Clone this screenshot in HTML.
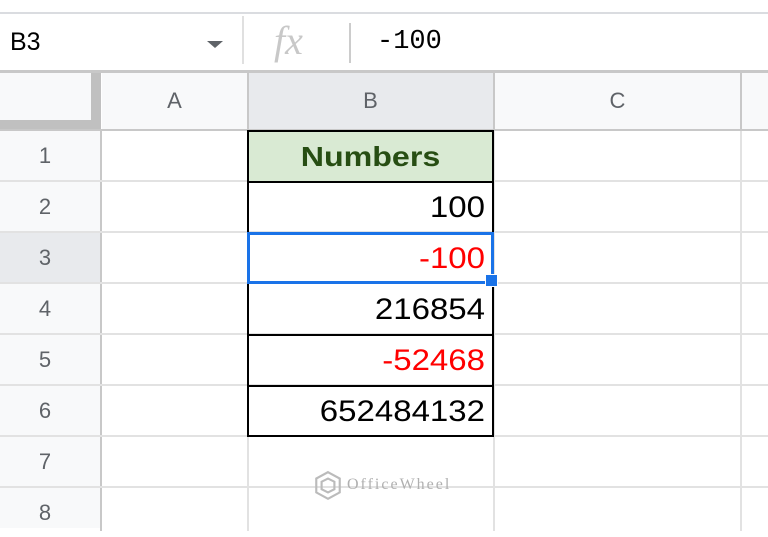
<!DOCTYPE html>
<html><head><style>
*{margin:0;padding:0;box-sizing:border-box}
body{width:768px;height:524px;overflow:hidden;background:#fff;position:relative;font-family:"Liberation Sans",Arial,sans-serif}
.a{position:absolute}
.hl{position:absolute;height:2px;background:#e2e2e2}
.vl{position:absolute;width:2px;background:#e2e2e2}
.rh{position:absolute;left:0;width:100px;height:49px;background:#f8f9fa;color:#5f6368;font-size:22px;line-height:49px}
.rh span{position:absolute;left:0;width:90px;text-align:center}
.ch{position:absolute;top:73px;height:56px;color:#5f6368;font-size:22px;text-align:center;line-height:56px;background:#f8f9fa}
.num{position:absolute;left:200px;width:285px;text-align:right;font-size:30px;line-height:49px;color:#000;transform:scaleX(1.1);transform-origin:right center}
</style></head><body>
<div class="a" style="left:0;top:12px;width:768px;height:2px;background:#dadce0"></div>
<div class="a" style="left:10px;top:28px;font-size:25px;color:#000">B3</div>
<div class="a" style="left:207px;top:41px;width:0;height:0;border-left:8px solid transparent;border-right:8px solid transparent;border-top:7px solid #5f6368"></div>
<div class="a" style="left:242px;top:16px;width:2px;height:48px;background:#e0e0e0"></div>
<div class="a" style="left:274px;top:17px;font-size:40px;font-style:italic;color:#c8c8c8;font-family:'Liberation Serif',serif">fx</div>
<div class="a" style="left:349px;top:23px;width:2px;height:40px;background:#ccc"></div>
<div class="a" style="left:377px;top:27px;font-size:27px;color:#000;font-family:'Liberation Mono',monospace">-100</div>
<div class="a" style="left:0;top:70px;width:768px;height:3px;background:#c8c8c8"></div>
<div class="a" style="left:0;top:73px;width:101px;height:57px;background:#f8f9fa"></div>
<div class="a" style="left:91px;top:73px;width:10px;height:57px;background:#c0c0c0"></div>
<div class="a" style="left:0;top:120px;width:101px;height:10px;background:#c0c0c0"></div>
<div class="ch" style="left:102px;width:145px">A</div>
<div class="ch" style="left:248px;width:245px;background:#e8eaed">B</div>
<div class="ch" style="left:495px;width:245px">C</div>
<div class="ch" style="left:742px;width:26px"></div>
<div class="a" style="left:247px;top:73px;width:2px;height:57px;background:#c8c8c8"></div>
<div class="a" style="left:493px;top:73px;width:2px;height:57px;background:#c8c8c8"></div>
<div class="a" style="left:740px;top:73px;width:2px;height:57px;background:#c8c8c8"></div>
<div class="a" style="left:0;top:129px;width:768px;height:2px;background:#c8c8c8"></div>
<div class="rh" style="top:131px"><span>1</span></div>
<div class="rh" style="top:182px"><span>2</span></div>
<div class="rh" style="top:233px;background:#e8eaed"><span>3</span></div>
<div class="rh" style="top:284px"><span>4</span></div>
<div class="rh" style="top:335px"><span>5</span></div>
<div class="rh" style="top:386px"><span>6</span></div>
<div class="rh" style="top:437px"><span>7</span></div>
<div class="rh" style="top:488px;height:40px"><span>8</span></div>
<div class="a" style="left:100px;top:131px;width:2px;height:400px;background:#c8c8c8"></div>
<div class="hl" style="left:0;top:180px;width:768px"></div>
<div class="hl" style="left:0;top:231px;width:768px"></div>
<div class="hl" style="left:0;top:282px;width:768px"></div>
<div class="hl" style="left:0;top:333px;width:768px"></div>
<div class="hl" style="left:0;top:384px;width:768px"></div>
<div class="hl" style="left:0;top:435px;width:768px"></div>
<div class="hl" style="left:0;top:486px;width:768px"></div>
<div class="vl" style="left:247px;top:131px;height:400px"></div>
<div class="vl" style="left:493px;top:131px;height:400px"></div>
<div class="vl" style="left:740px;top:131px;height:400px"></div>
<div class="a" style="left:248px;top:131px;width:245px;height:50px;background:#d9ead3"></div>
<div class="a" style="left:248px;top:131px;width:245px;height:50px;color:#274e13;font-weight:bold;font-size:28px;text-align:center;line-height:52px;transform:scaleX(1.15)">Numbers</div>
<div class="a" style="left:247px;top:130px;width:247px;height:307px;border:2px solid #000"></div>
<div class="a" style="left:247px;top:181px;width:247px;height:2px;background:#000"></div>
<div class="a" style="left:247px;top:334px;width:247px;height:2px;background:#000"></div>
<div class="a" style="left:247px;top:385px;width:247px;height:2px;background:#000"></div>
<div class="num" style="top:183px">100</div>
<div class="num" style="top:234px;color:#f00">-100</div>
<div class="num" style="top:285px">216854</div>
<div class="num" style="top:336px;color:#f00">-52468</div>
<div class="num" style="top:387px">652484132</div>
<div class="a" style="left:247px;top:232px;width:247px;height:52px;border:3px solid #1a73e8"></div>
<div class="a" style="left:485px;top:274px;width:13px;height:13px;background:#1a73e8;border:1px solid #fff"></div>
<svg class="a" style="left:313px;top:470px" width="30" height="32" viewBox="0 0 28 30"><path d="M14 2 L25 8 L25 21 L14 27 L3 21 L3 8 Z" fill="none" stroke="#bbb" stroke-width="2"/><path d="M14 8 L20 11 L20 18 L14 21 L8 18 L8 11 Z" fill="none" stroke="#bbb" stroke-width="2"/></svg>
<div class="a" style="left:347px;top:476px;font-size:16px;color:#b0b0b0;letter-spacing:2px;font-family:'Liberation Serif',serif">OfficeWheel</div>
</body></html>
